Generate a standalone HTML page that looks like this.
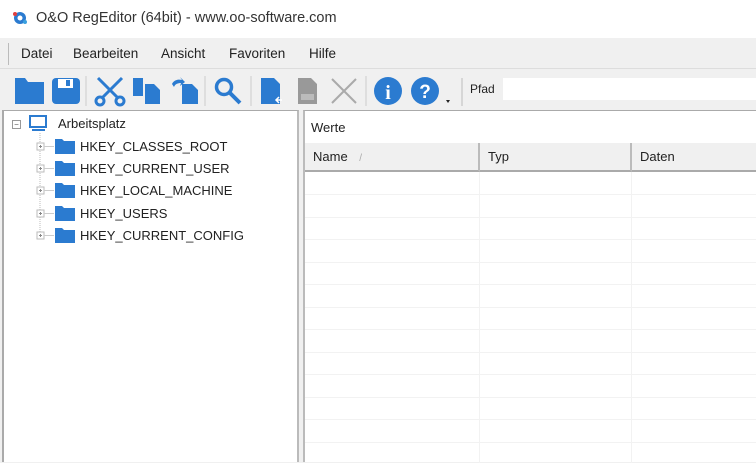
<!DOCTYPE html>
<html><head><style>
*{margin:0;padding:0;box-sizing:border-box}
body{width:756px;height:462px;overflow:hidden;background:#f0f0f0;font-family:"Liberation Sans",sans-serif;font-size:13px;color:#222;position:relative}
.a{position:absolute}
.title{left:0;top:0;width:756px;height:38px;background:#fff}
.menu{left:0;top:39px;width:756px;height:28px;background:#f0f0f0}
.menu span{position:absolute;top:7px;font-size:13.5px}
.left{left:2px;top:110px;width:297px;height:352px;background:#fff;border-left:2px solid #aaa;border-right:2px solid #bbb;border-top:1px solid #aaa}
.right{left:303px;top:110px;width:453px;height:352px;background:#fff;border-left:2px solid #bbb;border-top:1px solid #aaa}
.tree div{position:absolute;font-size:13px}
.hdr{position:absolute;top:32px;height:29px;background:#f0f0f0;border-bottom:2px solid #aaa;border-right:2px solid #bbb;padding:6px 8px;font-size:13px}
.row{position:absolute;left:0;width:453px;height:1px;background:#f2f2f2}
</style></head><body>
<div class="a title">
<svg class="a" style="left:12px;top:10px" width="16" height="16" viewBox="0 0 16 16"><circle cx="8" cy="8" r="6" fill="#2b7bd0"/><circle cx="8" cy="8" r="2.5" fill="#fff"/><circle cx="3" cy="4" r="2" fill="#e04040"/><circle cx="13" cy="12" r="2" fill="#3aa0e0"/></svg>
<div class="a" style="left:36px;top:10px;font-size:14.5px;color:#333">O&amp;O RegEditor (64bit) - www.oo-software.com</div>
</div>
<div class="a menu">
<div class="a" style="left:8px;top:4px;width:1px;height:22px;background:#bbb"></div>
<span style="left:21px">Datei</span><span style="left:73px">Bearbeiten</span><span style="left:161px">Ansicht</span><span style="left:229px">Favoriten</span><span style="left:309px">Hilfe</span>
</div>
<div class="a" style="left:0;top:68px;width:756px;height:1px;background:#ddd"></div>
<svg class="a" style="left:0;top:70px" width="470" height="40" viewBox="0 0 470 40">
<path d="M15 8h10l3 4h16v22H15z" fill="#2b7bd0"/>
<rect x="52" y="8" width="28" height="26" rx="4" fill="#2b7bd0"/><rect x="58" y="9" width="15" height="9" fill="#fff"/><rect x="66" y="10" width="4" height="6" fill="#2b7bd0"/>
<line x1="86" y1="6" x2="86" y2="36" stroke="#ccc"/>
<g stroke="#2b7bd0" stroke-width="3" fill="none"><line x1="98" y1="8" x2="118" y2="28"/><line x1="122" y1="8" x2="102" y2="28"/><circle cx="100" cy="31" r="4"/><circle cx="120" cy="31" r="4"/></g>
<path d="M133 8h10v18h-10z" fill="#2b7bd0"/><path d="M145 14h9l6 6v14h-15z" fill="#2b7bd0"/>
<path d="M172 14c2-4 6-5 10-4l-2-3 5 5-5 4 1-3c-3 0-6 1-7 4z" fill="#2b7bd0"/><path d="M182 14h10l6 6v14h-16z" fill="#2b7bd0"/>
<line x1="205" y1="6" x2="205" y2="36" stroke="#ccc"/>
<circle cx="224" cy="17" r="7.5" fill="none" stroke="#2b7bd0" stroke-width="3.5"/><line x1="230" y1="23" x2="240" y2="33" stroke="#2b7bd0" stroke-width="4"/>
<line x1="251" y1="6" x2="251" y2="36" stroke="#ccc"/>
<path d="M261 8h13l6 6v20h-19z" fill="#2b7bd0"/><path d="M276 30h6m-3-3l-3 3 3 3" stroke="#fff" stroke-width="1.5" fill="none"/>
<path d="M298 8h13l6 6v20h-19z" fill="#999"/><rect x="301" y="24" width="13" height="6" fill="#bbb"/>
<g stroke="#aaa" stroke-width="2"><line x1="332" y1="9" x2="356" y2="33"/><line x1="356" y1="9" x2="332" y2="33"/></g>
<line x1="366" y1="6" x2="366" y2="36" stroke="#ccc"/>
<circle cx="388" cy="21" r="14" fill="#2b7bd0"/><text x="388" y="29" font-family="Liberation Serif" font-weight="bold" font-size="20" fill="#fff" text-anchor="middle">i</text>
<circle cx="425" cy="21" r="14" fill="#2b7bd0"/><text x="425" y="28" font-family="Liberation Sans" font-weight="bold" font-size="19" fill="#fff" text-anchor="middle">?</text>
<path d="M446 30h4l-2 3z" fill="#222"/>
<line x1="462" y1="8" x2="462" y2="36" stroke="#bbb"/>
</svg>
<div class="a" style="left:466px;top:78px;width:290px;height:22px;background:#fff"></div>
<div class="a" style="left:466px;top:78px;width:37px;height:22px;background:#f0f0f0;font-size:12px;padding:4px 0 0 4px">Pfad</div>
<div class="a left tree">
<div style="left:8px;top:9px;width:9px;height:9px;border:1px solid #999;font-size:8px;line-height:7px;text-align:center;color:#555">−</div>
<svg class="a" style="left:25px;top:3px" width="20" height="18"><rect x="1" y="2" width="16" height="11" fill="none" stroke="#2b7bd0" stroke-width="2"/><line x1="3" y1="16" x2="16" y2="16" stroke="#2b7bd0" stroke-width="2"/></svg>
<div style="left:54px;top:5px">Arbeitsplatz</div>
<svg class="a" style="left:30px;top:22px" width="50" height="112">
<g stroke="#bbb" fill="none"><line x1="6" y1="0" x2="6" y2="104" stroke-dasharray="1 1"/>
<g fill="#fff"><rect x="3" y="10" width="7" height="7"/><rect x="3" y="32" width="7" height="7"/><rect x="3" y="54" width="7" height="7"/><rect x="3" y="77" width="7" height="7"/><rect x="3" y="99" width="7" height="7"/></g>
<g stroke="#888"><path d="M5 13.5h3M6.5 12v3M5 35.5h3M6.5 34v3M5 57.5h3M6.5 56v3M5 80.5h3M6.5 79v3M5 102.5h3M6.5 101v3"/></g>
<g stroke="#ccc"><path d="M10 13.5h10M10 35.5h10M10 57.5h10M10 80.5h10M10 102.5h10"/></g></g>
<g fill="#2b7bd0"><path d="M21 6h7l2 2h11v13h-20z"/><path d="M21 28h7l2 2h11v13h-20z"/><path d="M21 50h7l2 2h11v13h-20z"/><path d="M21 73h7l2 2h11v13h-20z"/><path d="M21 95h7l2 2h11v13h-20z"/></g>
</svg>
<div style="left:76px;top:28px">HKEY_CLASSES_ROOT</div>
<div style="left:76px;top:50px">HKEY_CURRENT_USER</div>
<div style="left:76px;top:72px">HKEY_LOCAL_MACHINE</div>
<div style="left:76px;top:95px">HKEY_USERS</div>
<div style="left:76px;top:117px">HKEY_CURRENT_CONFIG</div>
</div>
<div class="a right">
<div class="a" style="left:6px;top:9px;font-size:13px">Werte</div>
<div class="hdr" style="left:0;width:175px">Name <span style="color:#aaa;font-size:10px;margin-left:8px">/</span></div>
<div class="hdr" style="left:175px;width:152px">Typ</div>
<div class="hdr" style="left:327px;width:126px;border-right:none">Daten</div>
<div class="a" style="left:174px;top:61px;width:1px;height:291px;background:#f2f2f2"></div>
<div class="a" style="left:326px;top:61px;width:1px;height:291px;background:#f2f2f2"></div>
<div class="row" style="top:83px"></div><div class="row" style="top:106px"></div><div class="row" style="top:128px"></div><div class="row" style="top:151px"></div><div class="row" style="top:173px"></div><div class="row" style="top:196px"></div><div class="row" style="top:218px"></div><div class="row" style="top:241px"></div><div class="row" style="top:263px"></div><div class="row" style="top:286px"></div><div class="row" style="top:308px"></div><div class="row" style="top:331px"></div>
</div>
</body></html>
